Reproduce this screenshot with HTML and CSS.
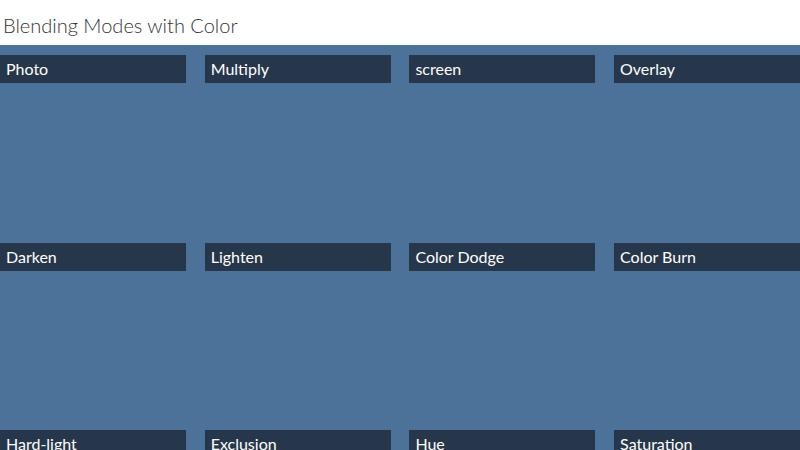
FILE: index.html
```html
<!DOCTYPE html>
<html>
<head>
  <meta charset="UTF-8">
  <title>Blending Modes with Color</title>
  <link rel="stylesheet" href="styles.css">
</head>
<body>
  <header class="top">
    <h1>Blending Modes with Color</h1>
  </header>

  <main class="gallery">
    <figure class="tile"><figcaption>Photo</figcaption></figure>
    <figure class="tile"><figcaption>Multiply</figcaption></figure>
    <figure class="tile"><figcaption>screen</figcaption></figure>
    <figure class="tile"><figcaption>Overlay</figcaption></figure>

    <figure class="tile"><figcaption>Darken</figcaption></figure>
    <figure class="tile"><figcaption>Lighten</figcaption></figure>
    <figure class="tile"><figcaption>Color Dodge</figcaption></figure>
    <figure class="tile"><figcaption>Color Burn</figcaption></figure>

    <figure class="tile"><figcaption>Hard-light</figcaption></figure>
    <figure class="tile"><figcaption>Exclusion</figcaption></figure>
    <figure class="tile"><figcaption>Hue</figcaption></figure>
    <figure class="tile"><figcaption>Saturation</figcaption></figure>
  </main>
</body>
</html>
```

FILE: styles.css
```css
html, body {
  margin: 0;
  height: 100%;
  overflow: hidden;
}
body {
  font-family: Lato, 'Open Sans', sans-serif;
  background: #4d7299;
}
.top {
  background: #fff;
  height: 45px;
  padding: 0 3px;
  box-sizing: border-box;
}
.top h1 {
  margin: 0;
  padding-top: 12px;
  font-size: 20px;
  line-height: 26px;
  font-weight: 300;
  color: #333;
}
.gallery {
  display: grid;
  grid-template-columns: repeat(4, 186px);
  grid-auto-rows: 168.5px;
  column-gap: 18.7px;
  row-gap: 19px;
  padding-top: 10px;
  width: 830px;
}
.tile {
  margin: 0;
  background: #4d7299;
}
.tile figcaption {
  background: #26374c;
  color: #fff;
  font-size: 16px;
  height: 28px;
  line-height: 27px;
  padding-left: 6px;
}
.tile:nth-child(4n) figcaption {
  width: 200px;
}
```
